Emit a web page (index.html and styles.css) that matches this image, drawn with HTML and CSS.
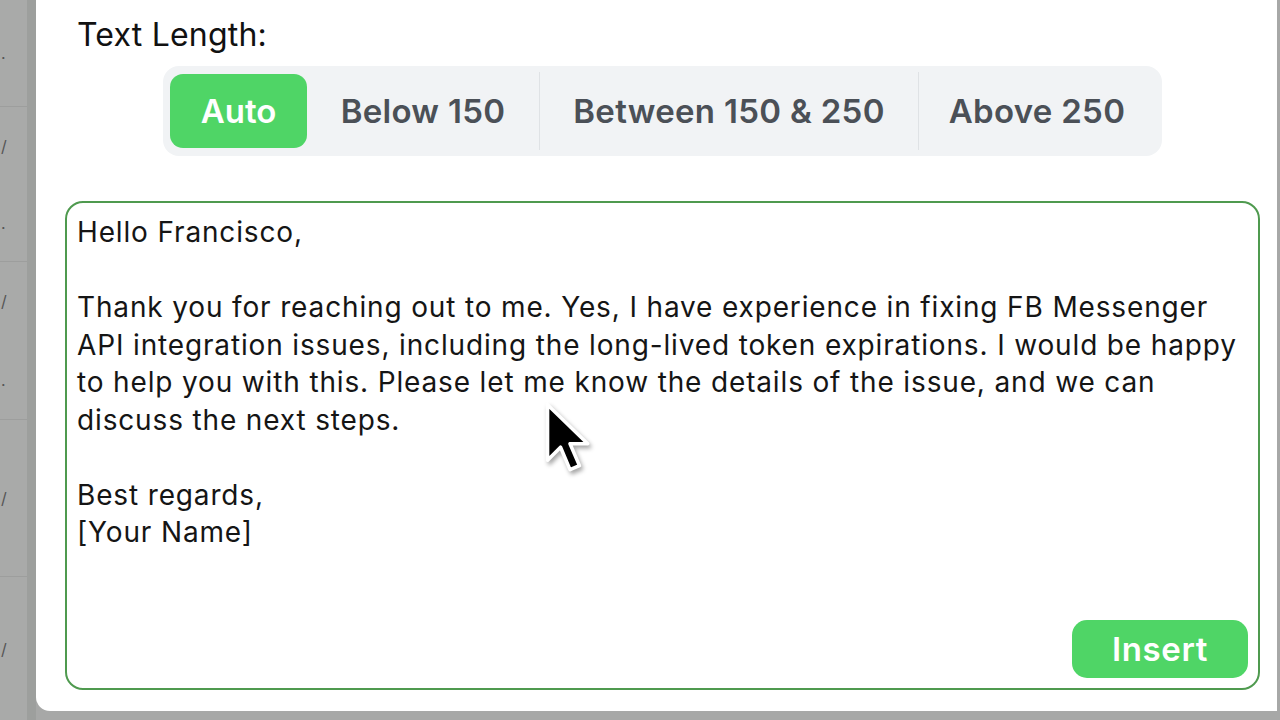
FILE: index.html
```html
<!DOCTYPE html>
<html lang="en">
<head>
<meta charset="utf-8">
<title>Text Length</title>
<link rel="stylesheet" href="styles.css">
</head>
<body>
<div class="backdrop">
  <div class="side">
    <div class="side-row r1"><span class="mark">.</span></div>
    <div class="side-row r2"><span class="mark">/</span><span class="mark">.</span></div>
    <div class="side-row r3"><span class="mark">/</span><span class="mark">.</span></div>
    <div class="side-row r4"><span class="mark">/</span></div>
    <div class="side-row r5"><span class="mark">/</span></div>
  </div>
  <div class="gutter"></div>
  <div class="modal">
    <div class="label">Text Length:</div>
    <div class="seg-wrap">
      <div class="seg">
        <div class="seg-item active">Auto</div>
        <div class="seg-item">Below 150</div>
        <div class="seg-sep"></div>
        <div class="seg-item">Between 150 &amp; 250</div>
        <div class="seg-sep"></div>
        <div class="seg-item">Above 250</div>
      </div>
    </div>
    <div class="editor">
      <div class="text">Hello Francisco,<br><br>Thank you for reaching out to me. Yes, I have experience in fixing FB Messenger<br>API integration issues, including the long-lived token expirations. I would be happy<br>to help you with this. Please let me know the details of the issue, and we can<br>discuss the next steps.<br><br>Best regards,<br>[Your Name]</div>
      <div class="actions"><button class="insert">Insert</button></div>
    </div>
  </div>
</div>
<svg class="cursor" width="52" height="83" viewBox="0 0 22 35" xmlns="http://www.w3.org/2000/svg">
  <path d="M1.5 1.5 L1.5 25 L7 19.5 L11 29 L15 27.3 L11 18 L18.5 18 Z" fill="#000" stroke="#fff" stroke-width="1.5" stroke-linejoin="round"/>
</svg>
</body>
</html>
```
FILE: styles.css
```css
html, body {
  margin: 0;
  padding: 0;
  width: 1280px;
  height: 720px;
  overflow: hidden;
  background: #a7a8a7;
  font-family: "Inter", "Noto Sans", sans-serif;
}

.backdrop {
  display: flex;
  height: 720px;
}

.side {
  width: 27px;
  background: #a9aaa9;
  display: flex;
  flex-direction: column;
}

.side-row {
  border-bottom: 1px solid #9d9e9d;
  display: flex;
  flex-direction: column;
  justify-content: space-around;
  color: #555;
  font-size: 16px;
  padding-left: 1px;
  box-sizing: border-box;
}

.r1 { height: 107px; }
.r2 { height: 155px; }
.r3 { height: 158px; }
.r4 { height: 157px; }
.r5 { height: 143px; border-bottom: none; }

.mark { line-height: 1; }

.gutter {
  width: 9px;
  background: #9d9f9d;
}

.modal {
  width: 1241px;
  height: 711px;
  background: #fff;
  border-radius: 0 0 0 14px;
  box-sizing: border-box;
  padding: 14px 17px 0 29px;
  display: flex;
  flex-direction: column;
}

.label {
  font-size: 32px;
  line-height: 42px;
  color: #111;
  padding-left: 12px;
  letter-spacing: 0.2px;
}

.seg-wrap {
  display: flex;
  padding-left: 98px;
  margin-top: 10px;
}

.seg {
  display: flex;
  align-items: center;
  width: 999px;
  height: 90px;
  box-sizing: border-box;
  background: #f1f3f5;
  border-radius: 16px;
  padding: 8px 7px;
}

.seg-item {
  height: 74px;
  display: flex;
  align-items: center;
  justify-content: center;
  font-size: 33px;
  font-weight: 600;
  color: #4b5057;
  letter-spacing: 0.3px;
}

.seg-item:nth-child(2) { width: 232px; }
.seg-item:nth-child(4) { width: 378px; }
.seg-item:nth-child(6) { flex: 1; }

.seg-item.active {
  width: 137px;
  background: #4fd566;
  color: #fff;
  border-radius: 13px;
  letter-spacing: 0;
}

.seg-sep {
  width: 1px;
  height: 78px;
  background: #dfe2e5;
}

.editor {
  margin-top: 45px;
  height: 489px;
  border: 2px solid #4f9a4f;
  border-radius: 18px;
  box-sizing: border-box;
  padding: 11px 10px 10px 10px;
  display: flex;
  flex-direction: column;
}

.text {
  flex: 1;
  font-size: 28px;
  line-height: 37.5px;
  color: #151515;
  white-space: nowrap;
  letter-spacing: 0.85px;
}

.actions {
  display: flex;
  justify-content: flex-end;
}

.insert {
  width: 176px;
  height: 58px;
  border: none;
  border-radius: 15px;
  background: #4fd566;
  color: #fff;
  font-family: inherit;
  font-size: 33px;
  font-weight: 600;
  letter-spacing: 0.6px;
  cursor: pointer;
}

.cursor {
  position: absolute;
  left: 544px;
  top: 401px;
  filter: drop-shadow(2px 3px 2px rgba(0, 0, 0, 0.35));
}
```
